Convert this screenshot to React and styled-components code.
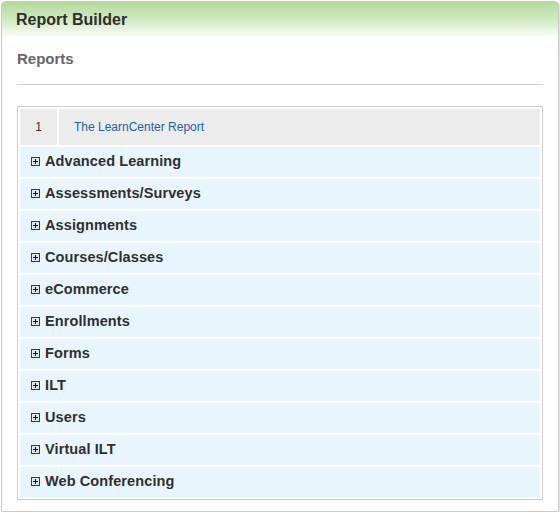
import styled, { createGlobalStyle } from 'styled-components';

const GlobalStyle = createGlobalStyle`
  html, body {
    margin: 0;
    padding: 0;
    background: #fff;
    font-family: "Liberation Sans", Arial, sans-serif;
  }
`;

const Panel = styled.div`
  margin: 1px 0 0 1px;
  width: 556px;
  height: 509px;
  border: 1px solid #c9c9c9;
  border-radius: 4px 4px 0 0;
  box-shadow: 1px 1px 0 #e2e2e2;
  background: #fff;
  display: flex;
  flex-direction: column;
`;

const Header = styled.div`
  height: 35px;
  padding-left: 14px;
  display: flex;
  align-items: center;
  border-radius: 3px 3px 0 0;
  background: linear-gradient(to bottom, #b2da9c 0%, #d4ebc7 55%, #fbfdf9 100%);
`;

const Title = styled.h1`
  margin: 0;
  font-size: 16px;
  font-weight: bold;
  color: #2e2e2e;
`;

const Body = styled.div`
  padding: 0 15px;
`;

const SectionTitle = styled.h2`
  margin: 13px 0 0 0;
  font-size: 15px;
  line-height: 18px;
  font-weight: bold;
  color: #666;
`;

const Rule = styled.hr`
  margin: 16px 0 21px 0;
  border: 0;
  height: 1px;
  background: #cccccc;
`;

const ReportTable = styled.div`
  border: 1px solid #cccccc;
  padding: 2px;
  display: flex;
  flex-direction: column;
  gap: 2px;
`;

const ReportRow = styled.div`
  display: flex;
  gap: 2px;
  height: 36px;
`;

const NumberCell = styled.div`
  width: 37px;
  background: #ececec;
  display: flex;
  align-items: center;
  justify-content: center;
  font-size: 12px;
  color: #333;
`;

const LinkCell = styled.div`
  flex: 1;
  background: #ececec;
  display: flex;
  align-items: center;
  padding-left: 15px;
`;

const ReportLink = styled.a`
  font-size: 12px;
  color: #1b62a5;
  text-decoration: none;
`;

const CategoryRow = styled.div`
  box-sizing: border-box;
  height: 30px;
  padding: 0 0 2px 11px;
  background: #e9f5fc;
  display: flex;
  align-items: center;
  gap: 5px;
  font-size: 14.5px;
  font-weight: bold;
  letter-spacing: 0.1px;
  color: #2f2f2f;
  cursor: pointer;
`;

const ExpandIcon = () => (
  <svg width="9" height="9" viewBox="0 0 9 9" style={{ flexShrink: 0 }}>
    <rect x="0.5" y="0.5" width="8" height="8" fill="#dfe6ee" stroke="#3a3a3a" />
    <path d="M2 4.5h5M4.5 2v5" stroke="#111" strokeWidth="1" />
  </svg>
);

const categories = [
  'Advanced Learning',
  'Assessments/Surveys',
  'Assignments',
  'Courses/Classes',
  'eCommerce',
  'Enrollments',
  'Forms',
  'ILT',
  'Users',
  'Virtual ILT',
  'Web Conferencing',
];

export default function App() {
  return (
    <>
      <GlobalStyle />
      <Panel>
        <Header>
          <Title>Report Builder</Title>
        </Header>
        <Body>
          <SectionTitle>Reports</SectionTitle>
          <Rule />
          <ReportTable>
            <ReportRow>
              <NumberCell>1</NumberCell>
              <LinkCell>
                <ReportLink href="#">The LearnCenter Report</ReportLink>
              </LinkCell>
            </ReportRow>
            {categories.map((name) => (
              <CategoryRow key={name}>
                <ExpandIcon />
                {name}
              </CategoryRow>
            ))}
          </ReportTable>
        </Body>
      </Panel>
    </>
  );
}
